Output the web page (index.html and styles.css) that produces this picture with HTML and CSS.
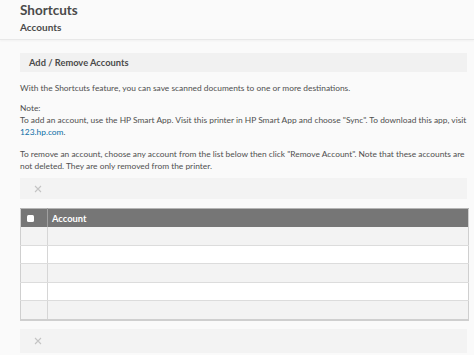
FILE: index.html
```html
<!DOCTYPE html>
<html>
<head>
<meta charset="utf-8">
<link rel="stylesheet" href="styles.css">
</head>
<body>
<header class="page-header">
  <h1 class="title">Shortcuts</h1>
  <h2 class="subtitle">Accounts</h2>
</header>
<main class="content">
  <div class="section-bar">Add / Remove Accounts</div>
  <p class="para first">With the Shortcuts feature, you can save scanned documents to one or more destinations.</p>
  <p class="para note">Note:<br>To add an account, use the HP Smart App. Visit this printer in HP Smart App and choose "Sync". To download this app, visit <a class="link" href="#">123.hp.com</a>.</p>
  <p class="para last">To remove an account, choose any account from the list below then click "Remove Account". Note that these accounts are not deleted. They are only removed from the printer.</p>
  <div class="toolbar">
    <span class="x-btn"><svg width="8" height="8" viewBox="0 0 8 8"><path d="M1 1L7 7M7 1L1 7" stroke="#c4c4c4" stroke-width="1.1" fill="none"/></svg></span>
  </div>
  <table class="grid">
    <thead>
      <tr><th class="chk"><span class="box"></span></th><th class="name">Account</th></tr>
    </thead>
    <tbody>
      <tr class="alt"><td class="chk"></td><td></td></tr>
      <tr><td class="chk"></td><td></td></tr>
      <tr class="alt"><td class="chk"></td><td></td></tr>
      <tr><td class="chk"></td><td></td></tr>
      <tr class="alt"><td class="chk"></td><td></td></tr>
    </tbody>
  </table>
  <div class="toolbar bottom">
    <span class="x-btn"><svg width="8" height="8" viewBox="0 0 8 8"><path d="M1 1L7 7M7 1L1 7" stroke="#c4c4c4" stroke-width="1.1" fill="none"/></svg></span>
  </div>
</main>
</body>
</html>
```
FILE: styles.css
```css
html, body {
  margin: 0;
  padding: 0;
  overflow: hidden;
}
body {
  background: #fafafa;
  font-family: Lato, "Open Sans", sans-serif;
  color: #4a4a4a;
}
.page-header {
  background: #fafafa;
  height: 40px;
  box-sizing: border-box;
  padding: 2px 20px 0;
  border-bottom: 1px solid #e8e8e8;
  box-shadow: 0 1px 2px rgba(0,0,0,0.04);
}
.title {
  margin: 0;
  font-size: 13.5px;
  line-height: 17px;
  font-weight: 700;
  color: #4a4a4a;
}
.subtitle {
  margin: 1px 0 0;
  font-size: 10px;
  line-height: 14px;
  font-weight: 700;
  color: #4a4a4a;
}
.content {
  padding: 13px 7px 0 20px;
}
.section-bar {
  background: #f1f1f1;
  height: 19px;
  line-height: 19px;
  padding-left: 9px;
  font-size: 9.3px;
  font-weight: 700;
  color: #4a4a4a;
}
.para {
  margin: 0;
  font-size: 8.4px;
  line-height: 12px;
  color: #4f4f4f;
}
.para.first {
  margin-top: 10px;
}
.para.note {
  margin-top: 8px;
}
.para.last {
  margin-top: 10px;
}
.link {
  color: #0a6ea6;
  text-decoration: none;
}
.toolbar {
  margin-top: 6px;
  height: 21px;
  background: #f3f3f3;
  display: flex;
  align-items: center;
}
.toolbar.bottom {
  margin-top: 8px;
  height: 24px;
}
.x-btn {
  display: flex;
  margin-left: 14px;
}
.grid {
  margin-top: 9px;
  width: 449px;
  border-collapse: collapse;
  border-left: 1px solid #cfcfcf;
  border-right: 1px solid #cfcfcf;
  border-bottom: 2px solid #cfcfcf;
  background: #fff;
}
.grid thead tr {
  background: #767676;
  border-top: 1px solid #b5b5b5;
}
.grid th {
  height: 18px;
  padding: 0;
  text-align: left;
  color: #fff;
  font-size: 9.3px;
  font-weight: 700;
}
.grid th.chk {
  width: 26px;
  border-right: 1px solid #a0a0a0;
  text-align: left;
}
.grid th.name {
  padding-left: 4px;
}
.box {
  display: block;
  width: 7px;
  height: 7px;
  margin-left: 6px;
  background: #fff;
  border-radius: 1.5px;
}
.grid td {
  height: 17.6px;
  padding: 0;
  border-bottom: 1px solid #dcdcdc;
}
.grid tbody tr:last-child td {
  border-bottom: none;
}
.grid td.chk {
  border-right: 1px solid #d6d6d6;
}
.grid tr.alt {
  background: #f3f3f3;
}
```
